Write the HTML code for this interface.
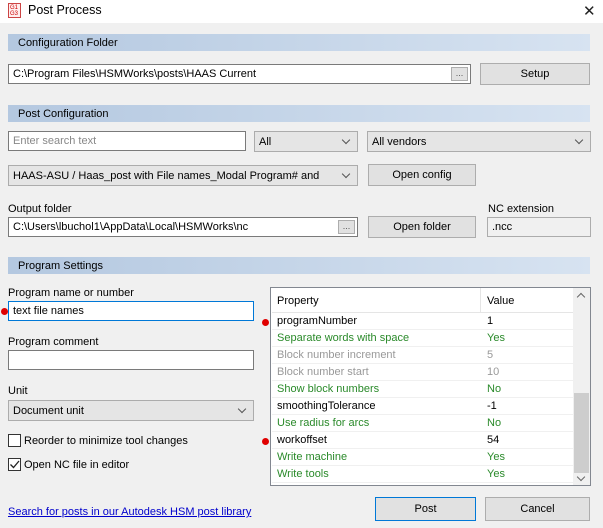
<!DOCTYPE html><html><head><style>
*{box-sizing:border-box;margin:0;padding:0}
body{width:603px;height:528px;background:#f0f0f0;font-family:"Liberation Sans",sans-serif;font-size:11px;color:#000;position:relative;overflow:hidden}
.a{position:absolute;white-space:nowrap}
.band{position:absolute;left:8px;width:582px;height:17px;background:linear-gradient(to right,#b4c8e0,#d7e3f1);padding-left:10px;line-height:18px}
.in{position:absolute;background:#fff;border:1px solid #7a7a7a;height:20px;line-height:19px;padding-left:4px}
.dd{position:absolute;background:#e5e5e5;border:1px solid #acacac;height:21px;line-height:20px;padding-left:4px;overflow:hidden}
.dd:after{content:"";position:absolute;right:8px;top:5px;width:5px;height:5px;border-right:1px solid #555;border-bottom:1px solid #555;transform:rotate(45deg)}
.bt{position:absolute;background:#e1e1e1;border:1px solid #adadad;height:22px;line-height:21px;text-align:center}
.dots{position:absolute;right:2px;top:2px;width:17px;height:14px;border:1px solid #adadad;background:#e1e1e1;font-size:9px;line-height:10px;text-align:center;color:#555}
.g{color:#2a8a2a}.gr{color:#999}
.row{position:absolute;left:1px;width:301px;height:17px;line-height:17px;border-bottom:1px solid #f0f0f0}
.row span{position:absolute;left:5px}.row b{font-weight:normal;position:absolute;left:215px}
.dot{position:absolute;width:7px;height:7px;border-radius:50%;background:#e00000}
.cb{position:absolute;width:13px;height:13px;border:1px solid #333;background:#fff}
</style></head><body>
<div class="a" style="left:0;top:0;width:603px;height:23px;background:#fff"></div>
<div class="a" style="left:8px;top:3px;width:13px;height:15px;border:1px solid #c44;font-size:6px;line-height:6px;color:#c00;background:#fee;padding:1px">G1<br>G3</div>
<div class="a" style="left:28px;top:3px;font-size:12.5px">Post Process</div>
<div class="a" style="left:583px;top:2px;font-size:15px;font-weight:100;color:#222">✕</div>

<div class="band" style="top:34px">Configuration Folder</div>
<div class="in" style="left:8px;top:64px;width:463px">C:\Program Files\HSMWorks\posts\HAAS Current<div class="dots">...</div></div>
<div class="bt" style="left:480px;top:63px;width:110px">Setup</div>

<div class="band" style="top:105px">Post Configuration</div>
<div class="in" style="left:8px;top:131px;width:238px;color:#888">Enter search text</div>
<div class="dd" style="left:254px;top:131px;width:104px">All</div>
<div class="dd" style="left:367px;top:131px;width:224px">All vendors</div>
<div class="dd" style="left:8px;top:165px;width:350px;padding-right:20px">HAAS-ASU / Haas_post with File names_Modal Program# and Work Off</div>
<div class="bt" style="left:368px;top:164px;width:108px">Open config</div>
<div class="a" style="left:8px;top:203px">Output folder</div>
<div class="a" style="left:488px;top:203px">NC extension</div>
<div class="in" style="left:8px;top:217px;width:350px">C:\Users\lbuchol1\AppData\Local\HSMWorks\nc<div class="dots">...</div></div>
<div class="bt" style="left:368px;top:216px;width:108px">Open folder</div>
<div class="in" style="left:487px;top:217px;width:104px;background:#f0f0f0;border-color:#acacac">.ncc</div>

<div class="band" style="top:257px">Program Settings</div>
<div class="a" style="left:8px;top:287px">Program name or number</div>
<div class="dot" style="left:1px;top:308px"></div>
<div class="in" style="left:8px;top:301px;width:246px;border-color:#0078d7">text file names</div>
<div class="a" style="left:8px;top:336px">Program comment</div>
<div class="in" style="left:8px;top:350px;width:246px"></div>
<div class="a" style="left:8px;top:385px">Unit</div>
<div class="dd" style="left:8px;top:400px;width:246px">Document unit</div>
<div class="cb" style="left:8px;top:434px"></div>
<div class="a" style="left:24px;top:435px">Reorder to minimize tool changes</div>
<div class="cb" style="left:8px;top:458px"><svg width="11" height="11" style="position:absolute;left:0;top:0"><path d="M1.5 5.5 L4.5 8.5 L10 2" stroke="#222" fill="none" stroke-width="1.3"/></svg></div>
<div class="a" style="left:24px;top:459px">Open NC file in editor</div>
<div class="a" style="left:8px;top:506px;color:#0000cc;text-decoration:underline">Search for posts in our Autodesk HSM post library</div>
<div class="bt" style="left:375px;top:497px;width:101px;height:24px;line-height:23px;border-color:#0078d7">Post</div>
<div class="bt" style="left:485px;top:497px;width:105px;height:24px;line-height:23px">Cancel</div>

<div class="a" style="left:270px;top:287px;width:321px;height:199px;background:#fff;border:1px solid #828790">
 <div class="a" style="left:1px;top:0;width:302px;height:25px;line-height:26px;border-bottom:1px solid #e5e5e5"><span style="position:absolute;left:5px">Property</span><span style="position:absolute;left:215px">Value</span><div style="position:absolute;left:208px;top:0;width:1px;height:24px;background:#e5e5e5"></div></div>
 <div class="row" style="top:25px"><span>programNumber</span><b>1</b></div>
 <div class="row g" style="top:42px"><span>Separate words with space</span><b>Yes</b></div>
 <div class="row gr" style="top:59px"><span>Block number increment</span><b>5</b></div>
 <div class="row gr" style="top:76px"><span>Block number start</span><b>10</b></div>
 <div class="row g" style="top:93px"><span>Show block numbers</span><b>No</b></div>
 <div class="row" style="top:110px"><span>smoothingTolerance</span><b>-1</b></div>
 <div class="row g" style="top:127px"><span>Use radius for arcs</span><b>No</b></div>
 <div class="row" style="top:144px"><span>workoffset</span><b>54</b></div>
 <div class="row g" style="top:161px"><span>Write machine</span><b>Yes</b></div>
 <div class="row g" style="top:178px"><span>Write tools</span><b>Yes</b></div>
 <div class="a" style="left:302px;top:0;width:17px;height:197px;background:#f0f0f0">
  <div class="a" style="left:1px;top:105px;width:15px;height:80px;background:#cdcdcd"></div>
  <div class="a" style="left:5px;top:6px;width:6px;height:6px;border-left:1px solid #666;border-top:1px solid #666;transform:rotate(45deg)"></div>
  <div class="a" style="left:5px;top:186px;width:6px;height:6px;border-right:1px solid #666;border-bottom:1px solid #666;transform:rotate(45deg)"></div>
 </div>
</div>
<div class="dot" style="left:262px;top:319px"></div>
<div class="dot" style="left:262px;top:438px"></div>
</body></html>
